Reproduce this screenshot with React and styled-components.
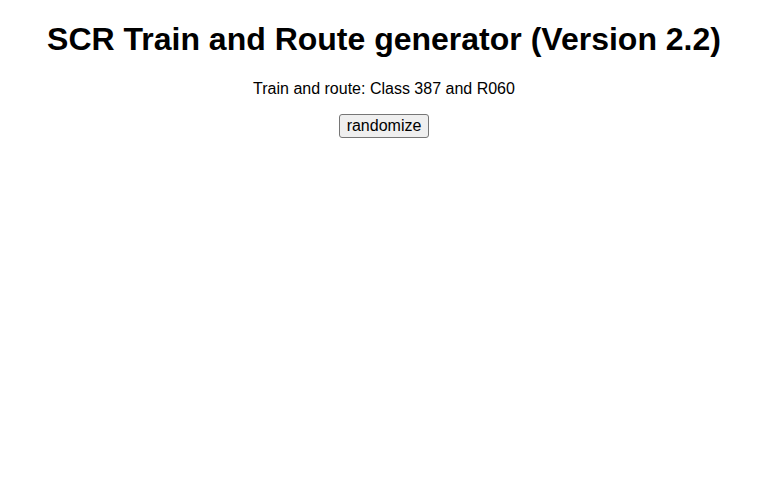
import { useState } from "react";
import styled, { createGlobalStyle } from "styled-components";

const trains = ["Class 387", "Class 171", "Class 377", "Class 455", "Class 700", "Class 802"];
const routes = ["R060", "R001", "R013", "R045", "R078", "R102"];

const GlobalStyle = createGlobalStyle`
  body {
    margin: 0 8px;
    background: #ffffff;
    color: #000000;
    font-family: "Liberation Sans", Arial, sans-serif;
  }
`;

const Page = styled.div`
  text-align: center;
`;

const Title = styled.h1`
  font-size: 32px;
  font-weight: bold;
  line-height: normal;
  margin: 21.44px 0;
`;

const Result = styled.p`
  font-size: 16px;
  line-height: normal;
  margin: 16px 0;
`;

const RandomButton = styled.button`
  font-family: "Liberation Sans", Arial, sans-serif;
  font-size: 16px;
  line-height: normal;
  color: #000000;
  background-color: #efefef;
  border: 1px solid #767676;
  border-radius: 3px;
  padding: 2px 7px;
  cursor: pointer;

  &:hover {
    background-color: #e5e5e5;
  }
`;

const pick = (list) => list[Math.floor(Math.random() * list.length)];

const App = () => {
  const [train, setTrain] = useState("Class 387");
  const [route, setRoute] = useState("R060");

  const randomize = () => {
    setTrain(pick(trains));
    setRoute(pick(routes));
  };

  return (
    <Page>
      <GlobalStyle />
      <Title>SCR Train and Route generator (Version 2.2)</Title>
      <Result>Train and route: {train} and {route}</Result>
      <RandomButton onClick={randomize}>randomize</RandomButton>
    </Page>
  );
};

export default App;
